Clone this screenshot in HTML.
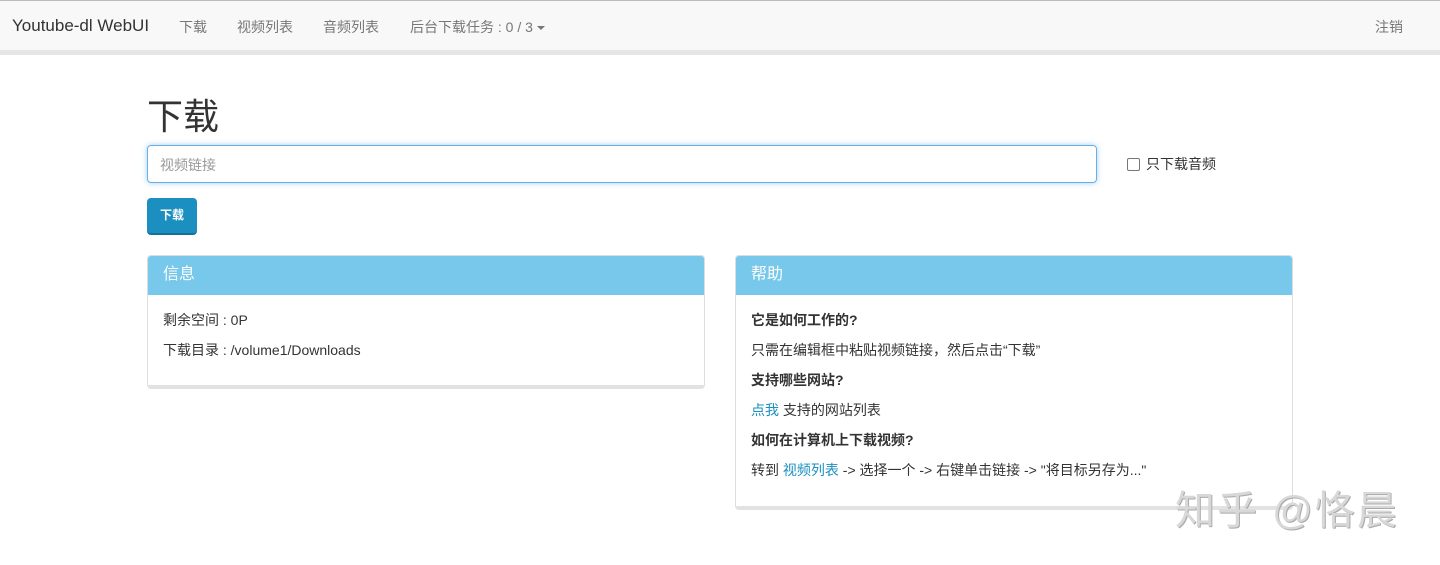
<!DOCTYPE html>
<html><head><meta charset="utf-8"><style>
*{box-sizing:border-box}
body{margin:0;width:1440px;height:565px;overflow:hidden;background:#fff;font-family:"Liberation Sans","Noto Sans CJK SC",sans-serif;font-size:14px;color:#333}
.nav{position:absolute;left:0;top:0;width:1440px;height:55px;background:#f8f8f8;border-top:1px solid #bbb;border-bottom:5px solid #e6e6e6}
.nav span{position:absolute;top:16px;color:#777;font-size:14px}
.brand{left:12px;color:#333!important;font-size:17px!important;top:15px!important}
.caret{display:inline-block;border-left:4px solid transparent;border-right:4px solid transparent;border-top:4px solid #777;vertical-align:middle;margin-left:4px}
h1{position:absolute;left:147px;top:88px;margin:0;font-size:36px;font-weight:400;color:#333}
.input{position:absolute;left:147px;top:145px;width:950px;height:38px;border:1px solid #66afe9;border-radius:4px;box-shadow:0 0 6px rgba(102,175,233,.6);padding:9px 12px;color:#999}
.chk{position:absolute;left:1127px;top:154px;font-size:14px}
.chk i{display:inline-block;width:13px;height:13px;border:1px solid #777;border-radius:2px;vertical-align:-2px;margin-right:6px}
.btn{position:absolute;left:147px;top:198px;width:50px;height:37px;background:#1a8fc0;border-radius:4px;color:#fff;font-weight:bold;font-size:12px;text-align:center;line-height:35px;border-bottom:2px solid #14729a}
.panel{position:absolute;border:1px solid #ddd;border-radius:4px;border-bottom:4px solid #e2e2e2}
.ph{background:#77c8ea;color:#fff;font-size:16px;height:39px;line-height:37px;padding-left:15px;border-radius:3px 3px 0 0}
.pb{padding:17px 15px 6px}
.pb p{margin:0 0 14px;line-height:16px}
a{color:#1a8fc0;text-decoration:none}
.wm{position:absolute;left:1175px;top:478px;font-size:40px;color:#d8d8d8;letter-spacing:2px;text-shadow:1px 1px 0 #aaa}
</style></head><body>
<div class="nav">
<span class="brand">Youtube-dl WebUI</span>
<span style="left:179px">下载</span>
<span style="left:237px">视频列表</span>
<span style="left:323px">音频列表</span>
<span style="left:410px">后台下载任务 : 0 / 3<i class="caret"></i></span>
<span style="left:1375px">注销</span>
</div>
<h1>下载</h1>
<div class="input">视频链接</div>
<div class="chk"><i></i>只下载音频</div>
<div class="btn">下载</div>
<div class="panel" style="left:147px;top:255px;width:558px;height:134px">
<div class="ph">信息</div>
<div class="pb"><p>剩余空间 : 0P</p><p>下载目录 : /volume1/Downloads</p></div>
</div>
<div class="panel" style="left:735px;top:255px;width:558px;height:255px">
<div class="ph">帮助</div>
<div class="pb"><p><b>它是如何工作的?</b></p><p>只需在编辑框中粘贴视频链接，然后点击“下载”</p><p><b>支持哪些网站?</b></p><p><a>点我</a> 支持的网站列表</p><p><b>如何在计算机上下载视频?</b></p><p>转到 <a>视频列表</a> -&gt; 选择一个 -&gt; 右键单击链接 -&gt; "将目标另存为..."</p></div>
</div>
<div class="wm">知乎 @恪晨</div>
</body></html>
